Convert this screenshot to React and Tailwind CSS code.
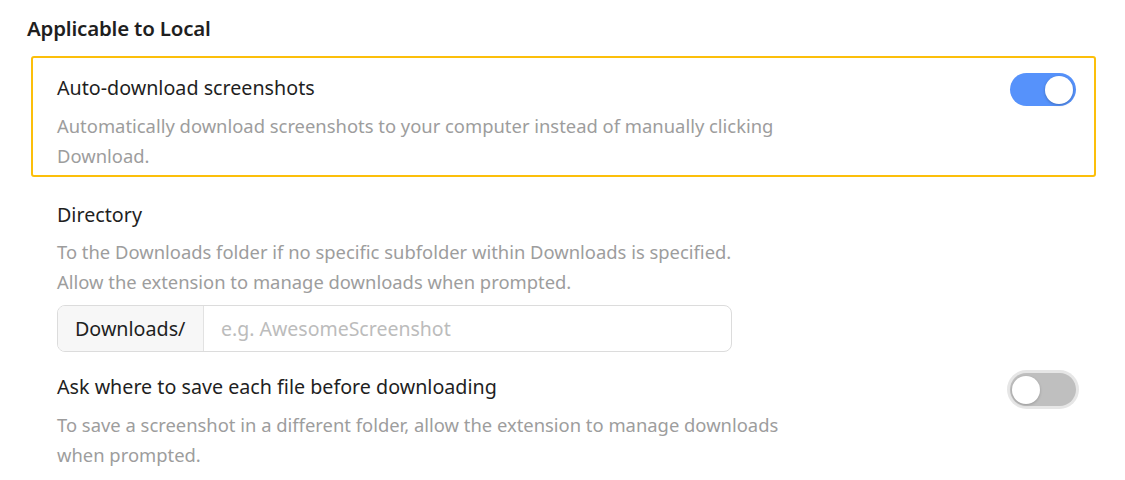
import { useState } from 'react'

const font = { fontFamily: '"Noto Sans", "Segoe UI", Arial, sans-serif' }

function Toggle({ on, onChange }) {
  if (on) {
    return (
      <button
        onClick={onChange}
        className="relative w-[66px] h-[33px] rounded-full bg-[#5692fb] shrink-0"
      >
        <span className="absolute right-[3px] top-[2.5px] w-[28px] h-[28px] rounded-full bg-white shadow-[0_1px_3px_rgba(0,0,0,0.25)]" />
      </button>
    )
  }
  return (
    <button
      onClick={onChange}
      className="relative w-[66px] h-[33px] rounded-full bg-[#bfbfbf] shadow-[0_0_0_3px_#e6e6e6] shrink-0"
    >
      <span className="absolute left-[2px] top-[2.5px] w-[28px] h-[28px] rounded-full bg-white shadow-[0_1px_3px_rgba(0,0,0,0.2)]" />
    </button>
  )
}

export default function App() {
  const [auto, setAuto] = useState(true)
  const [ask, setAsk] = useState(false)

  return (
    <div className="bg-white w-[1125px] h-[480px] pl-[27px] pr-[29px] pt-[14px]" style={font}>
      <h2 className="text-[20.5px] leading-[28px] font-semibold text-[#1f1f1f] tracking-[-0.2px]">Applicable to Local</h2>

      <div className="mt-[14px] border-2 border-[#fcbf0a] rounded-[3px] pl-[24px] pr-[18px] pt-[16px] pb-[4px] ml-[4px] flex items-start justify-between">
        <div>
          <div className="text-[19.7px] leading-[28px] text-[#1f1f1f]">Auto-download screenshots</div>
          <div className="mt-[9px] text-[18.4px] leading-[30px] text-[#9d9d9d]">
            <div>Automatically download screenshots to your computer instead of manually clicking</div>
            <div>Download.</div>
          </div>
        </div>
        <div className="mt-[-1px]">
          <Toggle on={auto} onChange={() => setAuto(!auto)} />
        </div>
      </div>

      <div className="ml-[30px] mt-[24px]">
        <div className="text-[19.7px] leading-[28px] text-[#1f1f1f]">Directory</div>
        <div className="mt-[8px] text-[18.4px] leading-[30px] text-[#9d9d9d]">
          <div>To the Downloads folder if no specific subfolder within Downloads is specified.</div>
          <div>Allow the extension to manage downloads when prompted.</div>
        </div>
        <div className="mt-[8px] w-[675px] h-[47px] flex border border-[#dcdcdc] rounded-[8px] overflow-hidden">
          <div className="w-[146px] shrink-0 bg-[#f7f7f7] border-r border-[#e2e2e2] flex items-center pl-[17px] text-[19.7px] text-[#1f1f1f]">
            Downloads/
          </div>
          <input
            className="flex-1 px-[17px] text-[19.5px] text-[#1f1f1f] placeholder-[#bcbcbc] outline-none"
            placeholder="e.g. AwesomeScreenshot"
            style={font}
          />
        </div>
      </div>

      <div className="ml-[30px] mr-[20px] mt-[21px] flex items-start justify-between">
        <div>
          <div className="text-[19.7px] leading-[28px] text-[#1f1f1f]">Ask where to save each file before downloading</div>
          <div className="mt-[9px] text-[18.4px] leading-[30px] text-[#9d9d9d]">
            <div>To save a screenshot in a different folder, allow the extension to manage downloads</div>
            <div>when prompted.</div>
          </div>
        </div>
        <div className="mt-[0px]">
          <Toggle on={ask} onChange={() => setAsk(!ask)} />
        </div>
      </div>
    </div>
  )
}
